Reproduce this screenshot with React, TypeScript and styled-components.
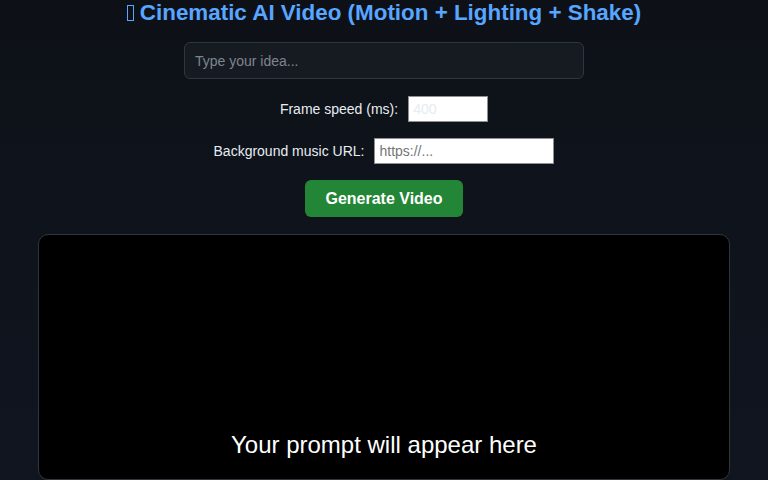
import React from "react";
import styled, { createGlobalStyle } from "styled-components";

const Global = createGlobalStyle`
  html, body { margin: 0; padding: 0; }
  body {
    background: linear-gradient(180deg, #0d1117 0%, #111520 100%);
    min-height: 100vh;
    font-family: "Liberation Sans", Arial, sans-serif;
    color: #e6edf3;
    overflow: hidden;
  }
`;

const Page = styled.div`
  display: flex;
  flex-direction: column;
  align-items: center;
  height: 480px;
`;

const Title = styled.h1`
  margin: 0;
  font-size: 22.4px;
  line-height: 25px;
  font-weight: bold;
  color: #58a6ff;
  text-align: center;
`;

const Tofu = styled.span`
  display: inline-block;
  width: 7px;
  height: 16px;
  box-sizing: border-box;
  border: 1px solid #58a6ff;
  vertical-align: -1px;
  margin-right: 6px;
`;

const IdeaInput = styled.input`
  margin-top: 17px;
  width: 400px;
  height: 38px;
  box-sizing: border-box;
  background: #161b22;
  border: 1px solid #30363d;
  border-radius: 6px;
  padding: 0 10px;
  color: #e6edf3;
  font-family: "Liberation Sans", Arial, sans-serif;
  font-size: 14px;
  outline: none;
  &::placeholder { color: #7d8590; }
`;

const Row = styled.label<{ $top: number }>`
  margin-top: ${(p) => p.$top}px;
  display: flex;
  align-items: center;
  gap: 10px;
  font-size: 14px;
  color: #e6edf3;
`;

const SmallInput = styled.input<{ $w: number }>`
  width: ${(p) => p.$w}px;
  height: 26px;
  box-sizing: border-box;
  background: #ffffff;
  border: 1px solid #8f8f8f;
  border-radius: 0;
  padding: 0 4px;
  font-family: "Liberation Sans", Arial, sans-serif;
  font-size: 14px;
  color: #111;
  outline: none;
  &::placeholder { color: #757575; }
`;

const SpeedInput = styled(SmallInput)`
  &::placeholder { color: #e6ecf2; }
`;

const GenerateButton = styled.button`
  margin-top: 16px;
  width: 158px;
  height: 38px;
  background: #238636;
  color: #ffffff;
  border: none;
  border-radius: 6px;
  font-family: "Liberation Sans", Arial, sans-serif;
  font-size: 16px;
  font-weight: bold;
  cursor: pointer;
`;

const Stage = styled.div`
  position: relative;
  margin-top: 17px;
  width: 692px;
  height: 246px;
  box-sizing: border-box;
  background: #000000;
  border: 1px solid #30363d;
  border-radius: 10px;
  flex-shrink: 0;
`;

const Caption = styled.div`
  position: absolute;
  left: 0;
  right: 0;
  bottom: 20px;
  text-align: center;
  font-size: 24px;
  color: #ffffff;
`;

export default function App() {
  return (
    <>
      <Global />
      <Page>
        <Title>
          <Tofu aria-hidden="true" />Cinematic AI Video (Motion + Lighting + Shake)
        </Title>
        <IdeaInput placeholder="Type your idea..." />
        <Row $top={17}>
          Frame speed (ms):
          <SpeedInput $w={80} placeholder="400" />
        </Row>
        <Row $top={16}>
          Background music URL:
          <SmallInput $w={180} placeholder="https://..." />
        </Row>
        <GenerateButton>Generate Video</GenerateButton>
        <Stage>
          <Caption>Your prompt will appear here</Caption>
        </Stage>
      </Page>
    </>
  );
}
